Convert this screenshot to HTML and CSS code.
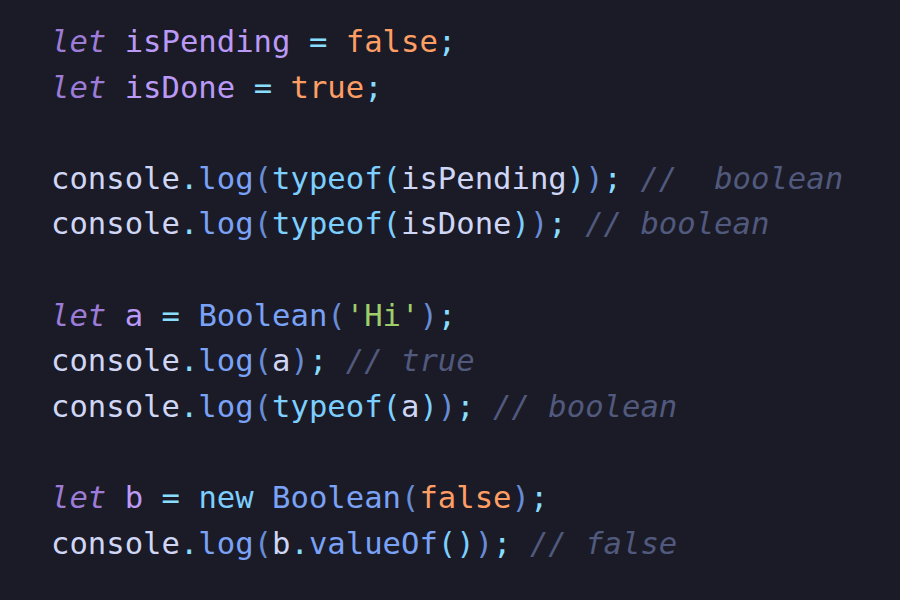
FILE: index.html
```html
<!DOCTYPE html>
<html>
<head>
<meta charset="utf-8">
<link rel="stylesheet" href="styles.css">
</head>
<body>
<div class="editor">
<div class="line"><span class="kw">let</span> <span class="decl">isPending</span> <span class="op">=</span> <span class="lit">false</span><span class="op">;</span></div>
<div class="line"><span class="kw">let</span> <span class="decl">isDone</span> <span class="op">=</span> <span class="lit">true</span><span class="op">;</span></div>
<div class="line"> </div>
<div class="line"><span class="var">console</span><span class="op">.</span><span class="fn">log</span><span class="b1">(</span><span class="ty">typeof</span><span class="b2">(</span><span class="var">isPending</span><span class="b2">)</span><span class="b1">)</span><span class="op">;</span> <span class="cm">//  boolean</span></div>
<div class="line"><span class="var">console</span><span class="op">.</span><span class="fn">log</span><span class="b1">(</span><span class="ty">typeof</span><span class="b2">(</span><span class="var">isDone</span><span class="b2">)</span><span class="b1">)</span><span class="op">;</span> <span class="cm">// boolean</span></div>
<div class="line"> </div>
<div class="line"><span class="kw">let</span> <span class="decl2">a</span> <span class="op">=</span> <span class="fn">Boolean</span><span class="b1">(</span><span class="str">'Hi'</span><span class="b1">)</span><span class="op">;</span></div>
<div class="line"><span class="var">console</span><span class="op">.</span><span class="fn">log</span><span class="b1">(</span><span class="var">a</span><span class="b1">)</span><span class="op">;</span> <span class="cm">// true</span></div>
<div class="line"><span class="var">console</span><span class="op">.</span><span class="fn">log</span><span class="b1">(</span><span class="ty">typeof</span><span class="b2">(</span><span class="var">a</span><span class="b2">)</span><span class="b1">)</span><span class="op">;</span> <span class="cm">// boolean</span></div>
<div class="line"> </div>
<div class="line"><span class="kw">let</span> <span class="decl2">b</span> <span class="op">=</span> <span class="ty">new</span> <span class="fn">Boolean</span><span class="b1">(</span><span class="lit">false</span><span class="b1">)</span><span class="op">;</span></div>
<div class="line"><span class="var">console</span><span class="op">.</span><span class="fn">log</span><span class="b1">(</span><span class="var">b</span><span class="op">.</span><span class="fn">valueOf</span><span class="b2">()</span><span class="b1">)</span><span class="op">;</span> <span class="cm">// false</span></div>
</div>
</body>
</html>
```
FILE: styles.css
```css
html, body {
  margin: 0;
  padding: 0;
  background: #1a1b26;
  height: 100%;
}
.editor {
  padding: 19px 0 0 51px;
  font-family: "DejaVu Sans Mono", "Liberation Mono", monospace;
  font-size: 30.6px;
  line-height: 45.6px;
  color: #d0d6f5;
}
.line {
  white-space: pre;
  height: 45.6px;
}
.kw { color: #9d7cd8; font-style: italic; }
.decl { color: #bb9af7; }
.decl2 { color: #bb9af7; }
.var { color: #d0d6f5; }
.op { color: #89ddff; }
.lit { color: #ff9e64; }
.fn { color: #7aa2f7; }
.ty { color: #7dcfff; }
.str { color: #9ece6a; }
.b1 { color: #698cd6; }
.b2 { color: #7dcfff; }
.cm { color: #51597d; font-style: italic; }
```
